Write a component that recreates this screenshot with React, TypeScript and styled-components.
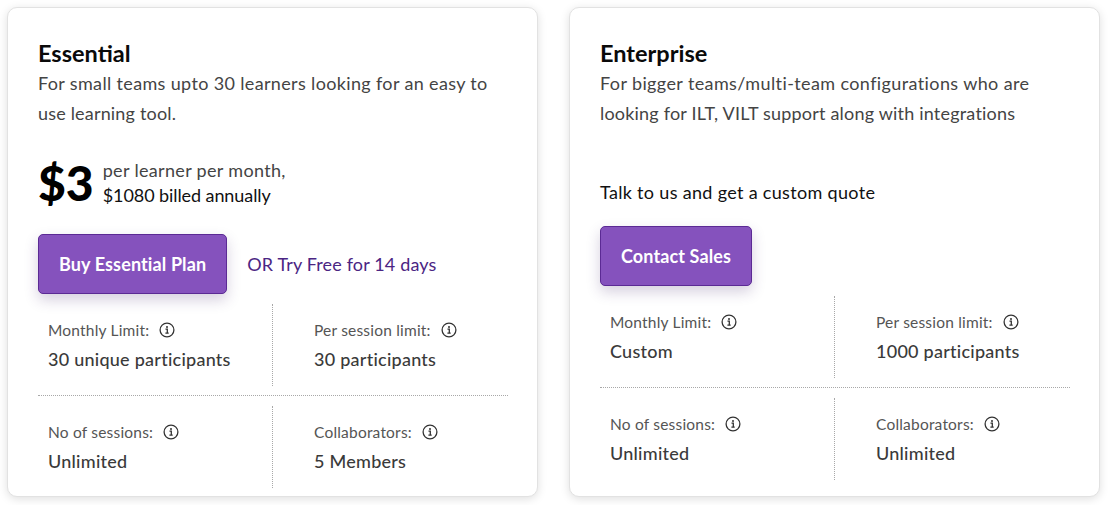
import React from "react";
import styled, { createGlobalStyle } from "styled-components";

const Global = createGlobalStyle`
  html, body { margin: 0; padding: 0; background: #fff; }
  body { font-family: "Lato", "Noto Sans", sans-serif; }
`;

const Page = styled.div`
  display: flex;
  gap: 31px;
  width: 1108px;
  height: 505px;
  padding: 7px 8px 8px 7px;
  box-sizing: border-box;
  overflow: hidden;
`;

const Card = styled.section`
  flex: 1 1 0;
  box-sizing: border-box;
  padding: 31px 29px 9px 30px;
  background: #fff;
  border: 1px solid #e2e2e2;
  border-radius: 10px;
  box-shadow: 0 2px 10px rgba(0, 0, 0, 0.13);
`;

const Title = styled.h2`
  margin: 0;
  height: 29px;
  font-size: 23.5px;
  line-height: 29px;
  font-weight: 700;
  color: #0a0a0a;
`;

const Description = styled.p`
  margin: 0;
  height: 60px;
  font-size: 18px;
  line-height: 30px;
  color: #444;
`;

const DescriptionLine = styled.span<{ $spacing: number }>`
  display: block;
  letter-spacing: ${(p) => p.$spacing}px;
`;

const PriceRow = styled.div`
  display: flex;
  align-items: center;
  gap: 9px;
  height: 50px;
  margin-top: 30px;
`;

const Amount = styled.span`
  font-size: 48px;
  line-height: 50px;
  font-weight: 900;
  color: #000;
`;

const PriceLines = styled.div`
  display: flex;
  flex-direction: column;
  font-size: 18px;
  line-height: 25px;
  letter-spacing: 0.33px;
  color: #444;
  strong { font-weight: 400; color: #111; letter-spacing: -0.08px; }
`;

const Quote = styled.p`
  margin: 51px 0 0;
  height: 26px;
  font-size: 18px;
  line-height: 26px;
  letter-spacing: 0.32px;
  color: #111;
`;

const ActionRow = styled.div<{ $top: number }>`
  display: flex;
  align-items: center;
  gap: 20px;
  margin-top: ${(p) => p.$top}px;
`;

const BuyButton = styled.button`
  height: 60px;
  padding: 0 20px;
  background: #8552bd;
  border: 1px solid #5b2a94;
  border-radius: 5px;
  box-shadow: 0 6px 14px rgba(70, 40, 110, 0.22);
  color: #fff;
  font-family: inherit;
  font-size: 18px;
  font-weight: 700;
  letter-spacing: 0.12px;
`;

const TryLink = styled.span`
  font-size: 18px;
  letter-spacing: 0.15px;
  color: #4b2583;
`;

const Stats = styled.div`
  margin-top: 10px;
`;

const StatRow = styled.div`
  display: grid;
  grid-template-columns: 234px 1fr;
  height: 82px;
`;

const Divider = styled.hr`
  margin: 9px 0 10px;
  height: 0;
  border: 0;
  border-top: 1px dotted #a8a8a8;
`;

const Stat = styled.div<{ $right?: boolean }>`
  padding: 16px 0 0 ${(p) => (p.$right ? "41px" : "10px")};
  ${(p) => (p.$right ? "border-left: 1px dotted #a8a8a8;" : "")}
`;

const StatLabel = styled.div`
  display: flex;
  align-items: center;
  gap: 10px;
  height: 20px;
  font-size: 15.5px;
  line-height: 20px;
  letter-spacing: 0.2px;
  color: #555;
`;

const StatValue = styled.div`
  margin-top: 6px;
  font-size: 18px;
  line-height: 26px;
  font-weight: 500;
  letter-spacing: 0.25px;
  color: #3a3a3a;
`;

const InfoIcon = () => (
  <svg width="16" height="16" viewBox="0 0 16 16" fill="none" aria-hidden="true">
    <circle cx="8" cy="8" r="6.9" stroke="#333" strokeWidth="1.3" />
    <circle cx="8" cy="4.9" r="1" fill="#333" />
    <path d="M6.5 7.2H8.3V11M6.4 11.2H9.7" stroke="#333" strokeWidth="1.3" />
  </svg>
);

type StatData = { label: string; value: string };

const StatCell = ({ item, right }: { item: StatData; right?: boolean }) => (
  <Stat $right={right}>
    <StatLabel>
      {item.label} <InfoIcon />
    </StatLabel>
    <StatValue>{item.value}</StatValue>
  </Stat>
);

const StatGrid = ({ items }: { items: StatData[] }) => (
  <Stats>
    <StatRow>
      <StatCell item={items[0]} />
      <StatCell item={items[1]} right />
    </StatRow>
    <Divider />
    <StatRow>
      <StatCell item={items[2]} />
      <StatCell item={items[3]} right />
    </StatRow>
  </Stats>
);

export default function App() {
  return (
    <Page>
      <Global />
      <Card>
        <Title>Essential</Title>
        <Description>
          <DescriptionLine $spacing={0.35}>
            For small teams upto 30 learners looking for an easy to
          </DescriptionLine>
          <DescriptionLine $spacing={0.18}>use learning tool.</DescriptionLine>
        </Description>
        <PriceRow>
          <Amount>$3</Amount>
          <PriceLines>
            <span>per learner per month,</span>
            <strong>$1080 billed annually</strong>
          </PriceLines>
        </PriceRow>
        <ActionRow $top={26}>
          <BuyButton>Buy Essential Plan</BuyButton>
          <TryLink>OR Try Free for 14 days</TryLink>
        </ActionRow>
        <StatGrid
          items={[
            { label: "Monthly Limit:", value: "30 unique participants" },
            { label: "Per session limit:", value: "30 participants" },
            { label: "No of sessions:", value: "Unlimited" },
            { label: "Collaborators:", value: "5 Members" },
          ]}
        />
      </Card>
      <Card>
        <Title>Enterprise</Title>
        <Description>
          <DescriptionLine $spacing={0.39}>
            For bigger teams/multi-team configurations who are
          </DescriptionLine>
          <DescriptionLine $spacing={0.2}>
            looking for ILT, VILT support along with integrations
          </DescriptionLine>
        </Description>
        <Quote>Talk to us and get a custom quote</Quote>
        <ActionRow $top={21}>
          <BuyButton>Contact Sales</BuyButton>
        </ActionRow>
        <StatGrid
          items={[
            { label: "Monthly Limit:", value: "Custom" },
            { label: "Per session limit:", value: "1000 participants" },
            { label: "No of sessions:", value: "Unlimited" },
            { label: "Collaborators:", value: "Unlimited" },
          ]}
        />
      </Card>
    </Page>
  );
}
